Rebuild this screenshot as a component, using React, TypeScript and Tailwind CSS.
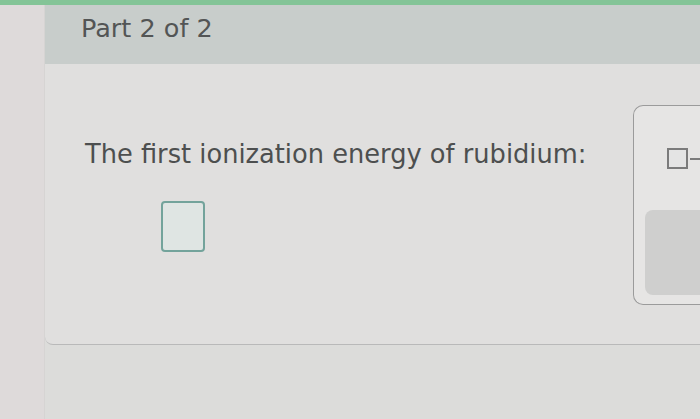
import React from "react";

export default function App() {
  return (
    <div className="w-[700px] h-[419px] overflow-hidden flex flex-col bg-[#dcdcda] font-['DejaVu_Sans',sans-serif]">
      <div className="h-[5px] bg-[#84c497] shrink-0" />
      <div className="flex flex-1 min-h-0">
        <div className="w-[45px] shrink-0 bg-[#dedada] border-r border-[#d6d4d3]" />
        <div className="flex-1 min-w-0 flex flex-col">
          <div className="h-[59px] shrink-0 bg-[#c8cdcb] pl-[36px] pt-[8px] text-[25.5px] leading-[30px] text-[#535555]">
            Part 2 of 2
          </div>
          <div className="h-[281px] shrink-0 flex bg-[#e0dfde] border-b border-[#b9b9b9] rounded-bl-[8px]">
            <div className="flex-1 min-w-0 pl-[40px] pt-[74px]">
              <div className="text-[25.7px] leading-[32px] text-[#4d4f4f] whitespace-nowrap">
                The first ionization energy of rubidium:
              </div>
              <div className="ml-[76px] mt-[31px] w-[44px] h-[51px] rounded-[4px] border-2 border-[#73a39b] bg-[#dfe5e3]" />
            </div>
            <div className="w-[67px] shrink-0 mt-[41px] h-[200px] rounded-l-[10px] border border-r-0 border-[#9b9b9b] bg-[#e6e5e4] pt-[42px] overflow-hidden">
              <div className="flex items-center ml-[33px]">
                <div className="w-[21px] h-[21px] border-2 border-[#7b7b7b] bg-[#e4e4e4] shrink-0" />
                <div className="w-[14px] h-[2px] bg-[#7b7b7b] ml-[2px]" />
              </div>
              <div className="ml-[11px] mt-[41px] w-[80px] h-[85px] rounded-[8px] bg-[#cfcfce]" />
            </div>
          </div>
        </div>
      </div>
    </div>
  );
}
